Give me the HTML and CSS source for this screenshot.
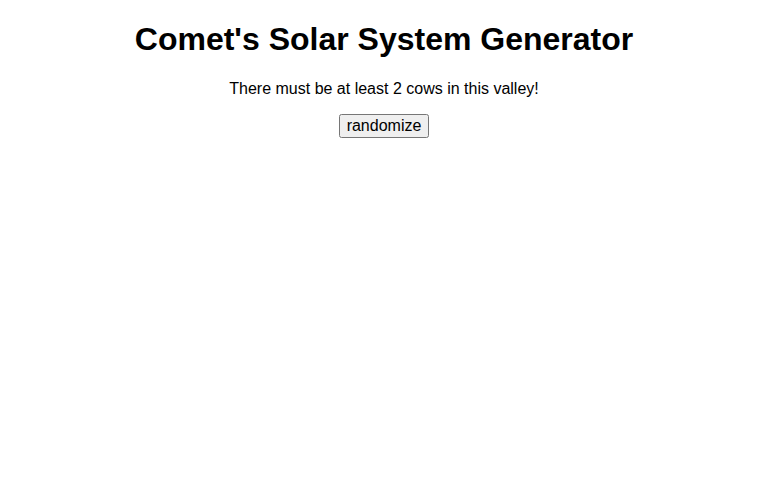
FILE: index.html
```html
<!DOCTYPE html>
<html>
<head>
<meta charset="utf-8">
<link rel="stylesheet" href="styles.css">
</head>
<body>
<div class="app">
  <h1 class="title">Comet's Solar System Generator</h1>
  <p class="message">There must be at least 2 cows in this valley!</p>
  <button class="randomize">randomize</button>
</div>
</body>
</html>
```
FILE: styles.css
```css
body {
  margin: 0 8px 8px;
  background: #ffffff;
  color: #000000;
  font-family: "Liberation Sans", Arial, sans-serif;
}
.app {
  text-align: center;
  padding-top: 0.01px;
}
.title {
  font-size: 32px;
  font-weight: bold;
  margin: 21.44px 0;
}
.message {
  font-size: 16px;
  margin: 16px 0;
}
.randomize {
  font-family: "Liberation Sans", Arial, sans-serif;
  font-size: 16px;
}
```
